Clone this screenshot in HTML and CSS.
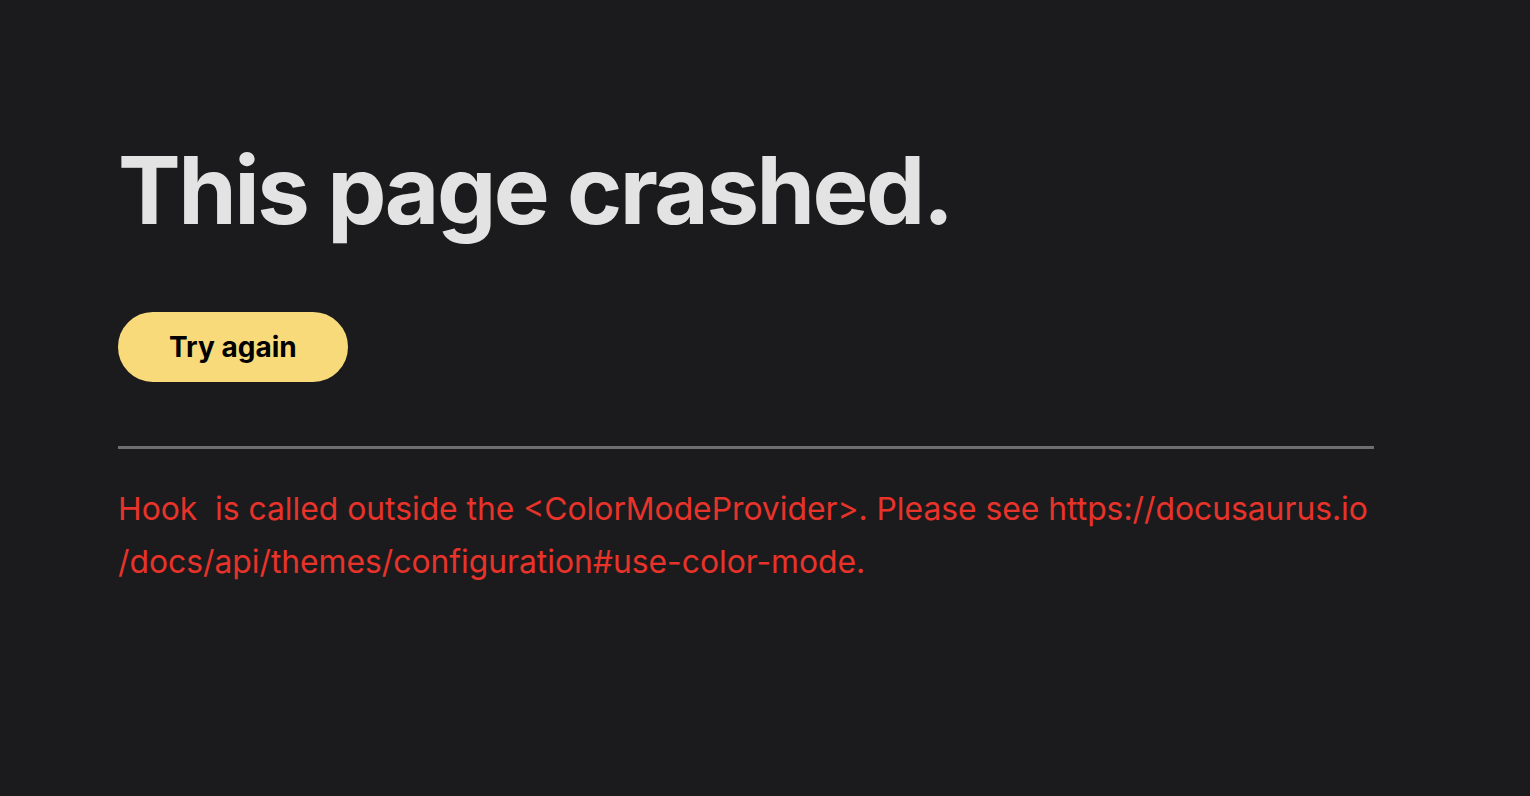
FILE: index.html
```html
<!DOCTYPE html>
<html lang="en">
<head>
<meta charset="utf-8">
<title>This page crashed.</title>
<link rel="stylesheet" href="styles.css">
</head>
<body>
<main class="error-page">
  <h1 class="title">This page crashed.</h1>
  <button class="retry" type="button">Try again</button>
  <hr class="divider">
  <p class="message">Hook&nbsp; is called outside the &lt;ColorModeProvider&gt;. Please see https://docusaurus.io<br>/docs/api/themes/configuration#use-color-mode.</p>
</main>
</body>
</html>
```

FILE: styles.css
```css
html, body {
  margin: 0;
  padding: 0;
  background: #1b1b1d;
  height: 100%;
}
body {
  font-family: Inter, "Noto Sans", "Liberation Sans", sans-serif;
  color: #e3e3e3;
}
.error-page {
  width: 1256px;
  padding: 130px 0 0 118px;
  display: flex;
  flex-direction: column;
  align-items: flex-start;
}
.title {
  margin: 0;
  font-size: 94px;
  line-height: 120px;
  font-weight: 700;
  letter-spacing: -2.5px;
  color: #e3e3e3;
}
.retry {
  margin-top: 62px;
  height: 70px;
  padding: 0 49px;
  border: 2px solid #f8da7b;
  border-radius: 35px;
  background: #f8da7b;
  color: #000;
  font-family: inherit;
  font-size: 28px;
  font-weight: 700;
  line-height: 42px;
}
.divider {
  align-self: stretch;
  margin: 64px 0 0;
  border: 0;
  height: 3px;
  background: #6e6e6e;
}
.message {
  margin: 33px 0 0;
  font-size: 31.8px;
  line-height: 53px;
  color: #e8332a;
}
```
